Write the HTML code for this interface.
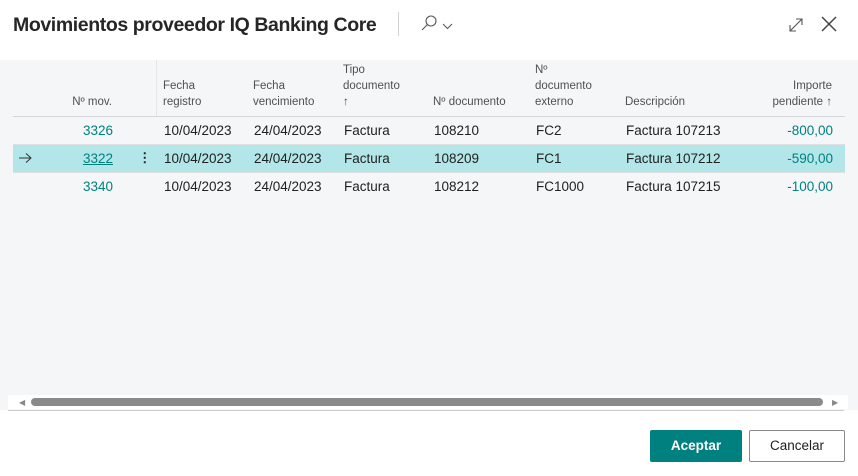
<!DOCTYPE html>
<html><head><meta charset="utf-8"><style>
*{margin:0;padding:0;box-sizing:border-box}
body{width:858px;height:476px;background:#fff;font-family:"Liberation Sans",sans-serif;color:#212121;position:relative;overflow:hidden}
.a{position:absolute;white-space:nowrap}
.h{font-size:11.5px;color:#505050;line-height:16px}
.d{font-size:13.5px;line-height:16px}
.t{color:#00807f}
.r{text-align:right}
</style></head><body>
<div class="a" style="left:13px;top:14px;font-size:19.5px;font-weight:bold;color:#262626;letter-spacing:-0.4px">Movimientos proveedor IQ Banking Core</div>
<div class="a" style="left:398px;top:12px;width:1px;height:24px;background:#d0d0d0"></div>
<svg class="a" style="left:418px;top:14px" width="40" height="20"><circle cx="13" cy="7" r="5" fill="none" stroke="#555" stroke-width="1.1"/><line x1="9.5" y1="10.5" x2="4" y2="16" stroke="#555" stroke-width="1.1"/><polyline points="25,10 29.5,14.5 34,10" fill="none" stroke="#555" stroke-width="1"/></svg>
<svg class="a" style="left:786px;top:14px" width="56" height="20"><path d="M4 17 L16 5 M10 5 H16 V11 M4 11 V17 H10" fill="none" stroke="#555" stroke-width="1.1"/><path d="M36 3 L50 17 M50 3 L36 17" stroke="#444" stroke-width="1.5"/></svg>
<div class="a" style="left:0;top:60px;width:858px;height:350px;background:#f5f6f8"></div>
<div class="a" style="left:156px;top:60px;width:1px;height:56px;background:#e6e6e6"></div>
<div class="a" style="left:13px;top:116px;width:832px;height:1px;background:#d6d6d6"></div>
<div class="a" style="left:13px;top:144px;width:832px;height:1px;background:#e0e0e0"></div>
<div class="a" style="left:13px;top:145px;width:832px;height:27px;background:#b2e6e8"></div>
<div class="a" style="left:13px;top:172px;width:832px;height:1px;background:#e0e0e0"></div>
<div class="a h r" style="left:40px;width:72px;top:94px">Nº mov.</div>
<div class="a h" style="left:163px;top:78px">Fecha<br>registro</div>
<div class="a h" style="left:253px;top:78px">Fecha<br>vencimiento</div>
<div class="a h" style="left:343px;top:62px">Tipo<br>documento<br>↑</div>
<div class="a h" style="left:433px;top:94px">Nº documento</div>
<div class="a h" style="left:535px;top:62px">Nº<br>documento<br>externo</div>
<div class="a h" style="left:625px;top:94px">Descripción</div>
<div class="a h r" style="left:720px;width:112px;top:78px">Importe<br>pendiente ↑</div>
<svg class="a" style="left:18px;top:152px" width="14" height="12"><path d="M1 6 H13 M8 1.5 L13 6 L8 10.5" fill="none" stroke="#333" stroke-width="1"/></svg>
<div class="a d" style="left:138px;top:150px;font-weight:bold">⋮</div>
<div class="a d t r" style="left:40px;width:73px;top:123px">3326</div>
<div class="a d t r" style="left:40px;width:73px;top:151px;text-decoration:underline">3322</div>
<div class="a d t r" style="left:40px;width:73px;top:179px">3340</div>
<div class="a d" style="left:164px;top:123px">10/04/2023</div>
<div class="a d" style="left:164px;top:151px">10/04/2023</div>
<div class="a d" style="left:164px;top:179px">10/04/2023</div>
<div class="a d" style="left:254px;top:123px">24/04/2023</div>
<div class="a d" style="left:254px;top:151px">24/04/2023</div>
<div class="a d" style="left:254px;top:179px">24/04/2023</div>
<div class="a d" style="left:344px;top:123px">Factura</div>
<div class="a d" style="left:344px;top:151px">Factura</div>
<div class="a d" style="left:344px;top:179px">Factura</div>
<div class="a d" style="left:434px;top:123px">108210</div>
<div class="a d" style="left:434px;top:151px">108209</div>
<div class="a d" style="left:434px;top:179px">108212</div>
<div class="a d" style="left:536px;top:123px">FC2</div>
<div class="a d" style="left:536px;top:151px">FC1</div>
<div class="a d" style="left:536px;top:179px">FC1000</div>
<div class="a d" style="left:626px;top:123px">Factura 107213</div>
<div class="a d" style="left:626px;top:151px">Factura 107212</div>
<div class="a d" style="left:626px;top:179px">Factura 107215</div>
<div class="a d t r" style="left:720px;width:113px;top:123px">-800,00</div>
<div class="a d t r" style="left:720px;width:113px;top:151px">-590,00</div>
<div class="a d t r" style="left:720px;width:113px;top:179px">-100,00</div>
<div class="a" style="left:8px;top:395px;width:840px;height:14px;background:#fff"></div>
<div class="a" style="left:19px;top:398px;font-size:8px;color:#888">◀</div>
<div class="a" style="left:31px;top:398px;width:792px;height:8px;border-radius:4px;background:#8a8a8a"></div>
<div class="a" style="left:832px;top:398px;font-size:8px;color:#888">▶</div>
<div class="a" style="left:8px;top:410px;width:836px;height:1px;background:#ccc"></div>
<div class="a" style="left:650px;top:430px;width:92px;height:32px;background:#00807f;border-radius:2px;color:#fff;font-weight:bold;font-size:13.5px;text-align:center;line-height:32px">Aceptar</div>
<div class="a" style="left:749px;top:430px;width:96px;height:32px;border:1px solid #8a8a8a;border-radius:2px;font-size:13.5px;text-align:center;line-height:30px">Cancelar</div>
</body></html>
